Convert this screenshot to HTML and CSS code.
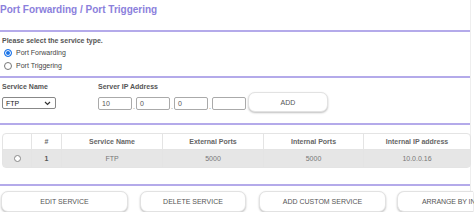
FILE: index.html
```html
<!DOCTYPE html>
<html lang="en">
<head>
    <meta charset="UTF-8">
    <title>Port Forwarding / Port Triggering</title>
    <link rel="stylesheet" href="styles.css">
</head>
<body>
    <div class="page">
        <div class="title">Port Forwarding / Port Triggering</div>

        <div class="section type">
            <div class="label">Please select the service type.</div>
            <label class="radio-row"><span class="radio checked"></span>Port Forwarding</label>
            <label class="radio-row"><span class="radio"></span>Port Triggering</label>
        </div>

        <div class="section service">
            <div class="field">
                <div class="label">Service Name</div>
                <div class="select">
                    <span>FTP</span>
                    <svg width="7" height="5" viewBox="0 0 7 5"><path d="M1 1 L3.5 3.5 L6 1" fill="none" stroke="#333" stroke-width="1.2"/></svg>
                </div>
            </div>
            <div class="field">
                <div class="label">Server IP Address</div>
                <div class="ip">
                    <div class="ip-box">10</div><span class="dot">.</span>
                    <div class="ip-box">0</div><span class="dot">.</span>
                    <div class="ip-box">0</div><span class="dot">.</span>
                    <div class="ip-box"></div>
                </div>
            </div>
            <div class="button add">ADD</div>
        </div>

        <div class="section list">
            <table>
                <tr>
                    <th class="c-sel"></th>
                    <th class="c-num">#</th>
                    <th class="c-name">Service Name</th>
                    <th class="c-ext">External Ports</th>
                    <th class="c-int">Internal Ports</th>
                    <th class="c-ip">Internal IP address</th>
                </tr>
                <tr class="row">
                    <td><span class="radio"></span></td>
                    <td class="num">1</td>
                    <td>FTP</td>
                    <td>5000</td>
                    <td>5000</td>
                    <td>10.0.0.16</td>
                </tr>
            </table>
        </div>

        <div class="actions">
            <div class="button edit">EDIT SERVICE</div>
            <div class="button delete">DELETE SERVICE</div>
            <div class="button custom">ADD CUSTOM SERVICE</div>
            <div class="button arrange">ARRANGE BY IN</div>
        </div>
    </div>
</body>
</html>
```

FILE: styles.css
```css
body {
    margin: 0;
    font-family: "Liberation Sans", Arial, sans-serif;
    background: #fff;
    color: #444;
    overflow: hidden;
}
.page {
    width: 470px;
    border-right: 1px solid #eee;
    min-height: 212px;
    box-sizing: content-box;
}
.title {
    height: 30px;
    line-height: 20px;
    font-size: 10px;
    font-weight: bold;
    color: #8b80dc;
    border-bottom: 2px solid #b4aaea;
}
.section {
    border-bottom: 2px solid #b4aaea;
}
.label {
    font-size: 7px;
    font-weight: bold;
    color: #555;
    line-height: 10px;
}
.type {
    height: 40px;
    padding: 4px 0 0 2px;
}
.radio-row {
    display: flex;
    align-items: center;
    height: 13px;
    font-size: 7px;
    color: #444;
}
.radio {
    display: inline-block;
    width: 6px;
    height: 6px;
    border: 1px solid #777;
    border-radius: 50%;
    margin: 0 4px 0 2px;
    background: #fff;
    box-sizing: content-box;
}
.radio.checked {
    border-color: #1a73e8;
    background: #1a73e8;
    box-shadow: inset 0 0 0 1px #fff;
}
.service {
    height: 45px;
    display: flex;
    align-items: flex-start;
    padding-left: 2px;
}
.field {
    padding-top: 4px;
}
.field .label {
    margin-bottom: 5px;
}
.field:first-child {
    width: 96px;
}
.select {
    width: 54px;
    height: 12px;
    border: 1px solid #888;
    border-radius: 2px;
    box-sizing: border-box;
    display: flex;
    align-items: center;
    justify-content: space-between;
    padding: 0 4px 0 3px;
    font-size: 7px;
    color: #222;
    margin-top: 1px;
}
.ip {
    display: flex;
    align-items: flex-end;
}
.ip-box {
    width: 34px;
    height: 13px;
    border: 1px solid #aaa;
    border-radius: 2px;
    box-sizing: border-box;
    font-size: 7px;
    line-height: 11px;
    padding-left: 3px;
    color: #555;
}
.dot {
    width: 4px;
    font-size: 7px;
    line-height: 7px;
    color: #777;
    text-align: center;
}
.button {
    background: #fff;
    border: 1px solid #e2e2e2;
    border-radius: 7px;
    box-shadow: 0 1px 2px rgba(0, 0, 0, 0.25);
    box-sizing: border-box;
    font-size: 7px;
    color: #555;
    text-align: center;
    display: flex;
    align-items: center;
    justify-content: center;
    white-space: nowrap;
}
.add {
    width: 80px;
    height: 20px;
    margin: 14px 0 0 2px;
}
.list {
    height: 51px;
    padding-top: 8px;
    padding-left: 2px;
}
table {
    width: 469px;
    border-spacing: 0;
    border: 1px solid #e4e4e4;
    border-radius: 4px;
    font-size: 7px;
    table-layout: fixed;
}
th, td {
    text-align: center;
    padding: 0;
    border-left: 1px solid #e4e4e4;
}
th:first-child, td:first-child {
    border-left: none;
}
th {
    height: 15px;
    font-weight: bold;
    color: #666;
    border-bottom: 1px solid #e4e4e4;
}
td {
    height: 17px;
    color: #777;
    background: #e6e6e6;
}
td .radio {
    margin: 0;
    width: 5px;
    height: 5px;
    border-color: #888;
}
td.num {
    font-weight: bold;
    color: #555;
}
.c-sel { width: 28px; }
.c-num { width: 29px; }
.c-name { width: 100px; }
.c-ext { width: 100px; }
.c-int { width: 99px; }
.actions {
    display: flex;
    padding: 5px 0 0 1px;
}
.actions .button {
    height: 21px;
    flex: none;
}
.edit { width: 127px; }
.delete { width: 106px; margin-left: 12px; }
.custom { width: 127px; margin-left: 13px; }
.arrange {
    width: 76px;
    margin-left: 11px;
    justify-content: flex-start;
    padding-left: 24px;
    border-right: none;
    border-radius: 7px 0 0 7px;
    letter-spacing: -0.1px;
}
```
